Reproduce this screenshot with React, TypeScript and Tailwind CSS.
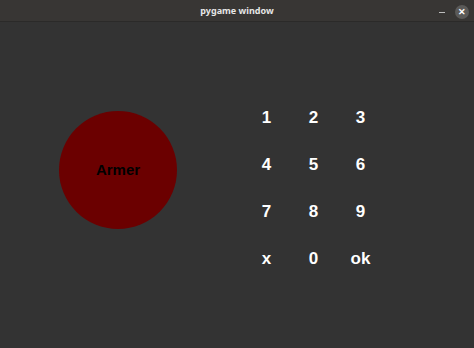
import React from 'react';

const keys = ['1', '2', '3', '4', '5', '6', '7', '8', '9', 'x', '0', 'ok'];

export default function App() {
  return (
    <div className="w-[474px] h-[348px] bg-[#333333] overflow-hidden" style={{ fontFamily: '"Liberation Sans", Arial, sans-serif' }}>
      {/* Title bar */}
      <div className="relative h-[22px] bg-[#383634] border-b border-[#2b2a29] flex items-center justify-center">
        <span className="text-[9px] font-bold text-[#e6e6e6]" style={{ fontFamily: '"Noto Sans", "DejaVu Sans", sans-serif' }}>pygame window</span>
        <span className="absolute left-[439px] top-[12px] w-[6px] h-[1px] bg-[#bdbdbd]" />
        <span className="absolute left-[455px] top-[5px] w-[14px] h-[14px] rounded-full bg-[#5b5a58] flex items-center justify-center text-[9px] leading-none font-bold text-white">✕</span>
      </div>

      {/* Content */}
      <div className="flex h-[326px]">
        <div className="ml-[59px] mt-[89px] w-[118px] h-[118px] rounded-full bg-[#6b0000] flex items-center justify-center">
          <span className="text-[15px] font-bold text-black">Armer</span>
        </div>
        <div className="ml-[66px] mt-[72px] grid grid-cols-[repeat(3,47px)] auto-rows-[47px] h-fit">
          {keys.map((k) => (
            <div key={k} className="flex items-center justify-center text-[17px] font-bold text-white">
              {k}
            </div>
          ))}
        </div>
      </div>
    </div>
  );
}
